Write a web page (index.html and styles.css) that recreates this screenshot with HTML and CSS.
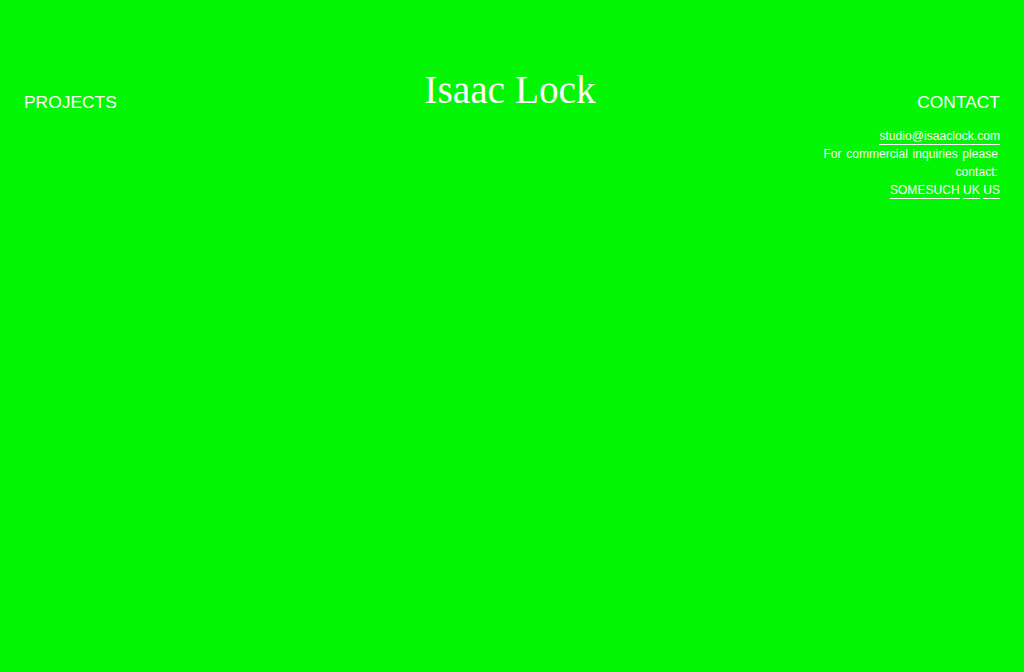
FILE: index.html
```html
<!DOCTYPE html>
<html lang="en">
<head>
<meta charset="utf-8">
<title>Isaac Lock</title>
<link rel="stylesheet" href="styles.css">
</head>
<body>
<header class="site-header">
  <nav class="nav-left"><a class="nav-link" href="#">PROJECTS</a></nav>
  <h1 class="site-title">Isaac Lock</h1>
  <div class="nav-right">
    <a class="nav-link" href="#">CONTACT</a>
    <div class="contact-info">
      <p class="line"><a class="ul" href="#">studio@isaaclock.com</a></p>
      <p class="line note">For commercial inquiries please contact:</p>
      <p class="line"><a class="ul" href="#">SOMESUCH</a> <a class="ul" href="#">UK</a> <a class="ul" href="#">US</a></p>
    </div>
  </div>
</header>
</body>
</html>
```
FILE: styles.css
```css
html, body {
  margin: 0;
  padding: 0;
  height: 100%;
}
body {
  background: #02f502;
  color: #ffffff;
  font-family: "Liberation Sans", Arial, sans-serif;
}
a {
  color: inherit;
  text-decoration: none;
}
.site-header {
  display: grid;
  grid-template-columns: 1fr auto 1fr;
  align-items: start;
  padding: 68px 24px 0;
}
.nav-left {
  padding-top: 24px;
}
.nav-link {
  font-size: 17.4px;
  line-height: 20px;
  display: inline-block;
}
.site-title {
  margin: 0;
  font-family: "Liberation Serif", "Times New Roman", serif;
  font-weight: normal;
  font-size: 39.3px;
  line-height: 44px;
  text-align: center;
  transform: translateX(-2px);
}
.nav-right {
  padding-top: 24px;
  text-align: right;
  justify-self: end;
  display: flex;
  flex-direction: column;
  align-items: flex-end;
}
.contact-info {
  margin-top: 15px;
  width: 186px;
  font-size: 12px;
  line-height: 18px;
  letter-spacing: 0.05px;
}
.line {
  margin: 0;
}
.note {
  padding-right: 2px;
  word-spacing: 1.2px;
}
.ul {
  border-bottom: 1px solid #ffffff;
  padding-bottom: 1px;
}
```
